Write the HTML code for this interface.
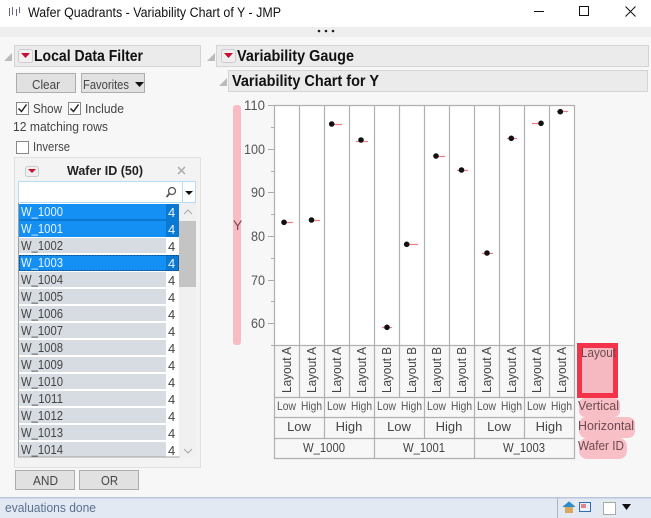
<!DOCTYPE html>
<html><head><meta charset="utf-8"><style>
html,body{margin:0;padding:0;background:#f7f7f7;width:651px;height:518px;overflow:hidden}
svg{display:block;font-family:"Liberation Sans",sans-serif;filter:blur(0.3px)}
text{fill:#444}
.h{font-weight:bold;font-size:15.5px;fill:#111}
.t{font-size:13px}
.r{font-size:13px;fill:#444}
.w{font-size:13px;fill:#e8f4ff}
.y{font-size:14px;fill:#555}
.v{font-size:13px;fill:#444}
.s{font-size:12px;fill:#555}
</style></head><body>
<svg width="651" height="518" viewBox="0 0 651 518" xmlns="http://www.w3.org/2000/svg">
<rect width="651" height="27" fill="#fff"/>
<rect y="27" width="651" height="10" fill="#eeeeee"/>
<!-- title -->
<g fill="none" stroke="#667" stroke-width="1"><path d="M9.5 8v8M12.5 7v8M16.5 9v7M19.5 7v6"/></g>
<text x="28" y="17" style="font-size:13.5px;fill:#111" textLength="253" lengthAdjust="spacingAndGlyphs">Wafer Quadrants - Variability Chart of Y - JMP</text>
<path d="M534 11.5h10" stroke="#111" stroke-width="1"/>
<rect x="579.5" y="6.5" width="9" height="9" fill="none" stroke="#111" stroke-width="1"/>
<path d="M625.5 6.5l10 10M635.5 6.5l-10 10" stroke="#111" stroke-width="1"/>
<g fill="#222"><circle cx="319" cy="31" r="1.3"/><circle cx="326" cy="31" r="1.3"/><circle cx="333" cy="31" r="1.3"/></g>

<!-- headers -->
<path d="M4 61h8v-8z" fill="#bbb"/>
<rect x="14.500" y="45.500" width="186" height="21" fill="#ebebeb" stroke="#d4d4d4"/>
<rect x="18.500" y="49.500" width="14" height="13" rx="2" fill="#f0f0f0" stroke="#ccc"/>
<path d="M21 53h9l-4.500 5z" fill="#c8102e"/>
<text x="34" y="61" class="h" textLength="109" lengthAdjust="spacingAndGlyphs">Local Data Filter</text>
<path d="M207 61h8v-8z" fill="#bbb"/>
<rect x="216.500" y="45.500" width="432" height="21" fill="#ebebeb" stroke="#d4d4d4"/>
<rect x="221.500" y="49.500" width="14" height="13" rx="2" fill="#f0f0f0" stroke="#ccc"/>
<path d="M224 53h9l-4.500 5z" fill="#c8102e"/>
<text x="237" y="61" class="h" textLength="117" lengthAdjust="spacingAndGlyphs">Variability Gauge</text>
<path d="M219 86h8v-8z" fill="#bbb"/>
<rect x="228.500" y="70.500" width="419" height="21" fill="#ebebeb" stroke="#d4d4d4"/>
<text x="232" y="86" class="h" textLength="147" lengthAdjust="spacingAndGlyphs">Variability Chart for Y</text>

<!-- filter controls -->
<rect x="16.500" y="73.500" width="59" height="19" fill="#e1e1e1" stroke="#adadad"/>
<text x="32" y="89" class="t" textLength="28" lengthAdjust="spacingAndGlyphs">Clear</text>
<rect x="81.500" y="73.500" width="63" height="19" fill="#e1e1e1" stroke="#adadad"/>
<text x="83" y="89" class="t" textLength="46" lengthAdjust="spacingAndGlyphs">Favorites</text>
<path d="M135 82h9l-4.500 5z" fill="#111"/>
<rect x="16.500" y="102.500" width="12" height="12" fill="#fff" stroke="#888"/>
<path d="M18.500 108.500l3 3 5-7" fill="none" stroke="#222" stroke-width="1.500"/>
<text x="33" y="113" class="t" textLength="29" lengthAdjust="spacingAndGlyphs">Show</text>
<rect x="68.500" y="102.500" width="12" height="12" fill="#fff" stroke="#888"/>
<path d="M70.500 108.500l3 3 5-7" fill="none" stroke="#222" stroke-width="1.500"/>
<text x="85" y="113" class="t" textLength="39" lengthAdjust="spacingAndGlyphs">Include</text>
<text x="13" y="131" class="t" textLength="95" lengthAdjust="spacingAndGlyphs">12 matching rows</text>
<rect x="16.500" y="141.500" width="12" height="12" fill="#fff" stroke="#888"/>
<text x="33" y="151" class="t" textLength="37" lengthAdjust="spacingAndGlyphs">Inverse</text>

<!-- filter box -->
<rect x="14.500" y="157.500" width="186" height="310" fill="#f3f3f3" stroke="#e0e0e0"/>
<rect x="25.500" y="166.500" width="13" height="10" rx="2" fill="#f0f0f0" stroke="#ccc"/>
<path d="M28 169h8l-4 4z" fill="#c8102e"/>
<text x="67" y="175" style="font-size:13px;font-weight:bold;fill:#222" textLength="76" lengthAdjust="spacingAndGlyphs">Wafer ID (50)</text>
<path d="M178 167l7 7M185 167l-7 7" stroke="#aaa" stroke-width="1.500"/>
<rect x="18.500" y="181.500" width="177" height="21" fill="#fff" stroke="#b5dcf5"/>
<path d="M182.500 181.500v21" stroke="#b5dcf5"/>
<circle cx="172" cy="191" r="3.500" fill="none" stroke="#555" stroke-width="1.300"/>
<path d="M169.500 193.500l-3 3.500" stroke="#555" stroke-width="1.800"/>
<path d="M185 191h8l-4 4z" fill="#111"/>

<!-- list -->
<rect x="18" y="203" width="161" height="254" fill="#fff"/>
<rect x="179" y="203" width="17" height="254" fill="#f0f0f0"/>
<rect x="179" y="221" width="17" height="66" fill="#c4c4c4"/>
<path d="M184 214l4-4 4 4" fill="none" stroke="#aaa"/>
<path d="M184 449l4 4 4-4" fill="none" stroke="#aaa"/>
<g fill="#d7dce2">
<rect x="19" y="238" width="147" height="15"/>
<rect x="19" y="272" width="147" height="15"/>
<rect x="19" y="289" width="147" height="15"/>
<rect x="19" y="306" width="147" height="15"/>
<rect x="19" y="323" width="147" height="15"/>
<rect x="19" y="340" width="147" height="15"/>
<rect x="19" y="357" width="147" height="15"/>
<rect x="19" y="374" width="147" height="15"/>
<rect x="19" y="391" width="147" height="15"/>
<rect x="19" y="408" width="147" height="15"/>
<rect x="19" y="425" width="147" height="15"/>
<rect x="19" y="442" width="147" height="15"/>
</g>
<g fill="#1490f5">
<rect x="19" y="204" width="147" height="15"/>
<rect x="19" y="221" width="147" height="16"/>
<rect x="19" y="255" width="147" height="16"/>
</g>
<g fill="#0b78d2">
<rect x="166" y="204" width="13" height="15"/>
<rect x="166" y="221" width="13" height="16"/>
<rect x="166" y="255" width="13" height="16"/>
</g>
<rect x="19" y="219" width="160" height="2" fill="#0b78d2"/>
<rect x="19.500" y="255.500" width="159" height="15" fill="none" stroke="#0a4f8c" stroke-dasharray="2 1"/>
<path d="M18.500 203v254h161" fill="none" stroke="#a0a0a0"/>
<g>
<text x="21" y="216" class="w" textLength="42" lengthAdjust="spacingAndGlyphs">W_1000</text>
<text x="21" y="233" class="w" textLength="42" lengthAdjust="spacingAndGlyphs">W_1001</text>
<text x="21" y="250" class="r" textLength="42" lengthAdjust="spacingAndGlyphs">W_1002</text>
<text x="21" y="267" class="w" textLength="42" lengthAdjust="spacingAndGlyphs">W_1003</text>
<text x="21" y="284" class="r" textLength="42" lengthAdjust="spacingAndGlyphs">W_1004</text>
<text x="21" y="301" class="r" textLength="42" lengthAdjust="spacingAndGlyphs">W_1005</text>
<text x="21" y="318" class="r" textLength="42" lengthAdjust="spacingAndGlyphs">W_1006</text>
<text x="21" y="335" class="r" textLength="42" lengthAdjust="spacingAndGlyphs">W_1007</text>
<text x="21" y="352" class="r" textLength="42" lengthAdjust="spacingAndGlyphs">W_1008</text>
<text x="21" y="369" class="r" textLength="42" lengthAdjust="spacingAndGlyphs">W_1009</text>
<text x="21" y="386" class="r" textLength="42" lengthAdjust="spacingAndGlyphs">W_1010</text>
<text x="21" y="403" class="r" textLength="42" lengthAdjust="spacingAndGlyphs">W_1011</text>
<text x="21" y="420" class="r" textLength="42" lengthAdjust="spacingAndGlyphs">W_1012</text>
<text x="21" y="437" class="r" textLength="42" lengthAdjust="spacingAndGlyphs">W_1013</text>
<text x="21" y="454" class="r" textLength="42" lengthAdjust="spacingAndGlyphs">W_1014</text>
<text x="168" y="217" class="w">4</text>
<text x="168" y="234" class="w">4</text>
<text x="168" y="251" class="r">4</text>
<text x="168" y="268" class="w">4</text>
<text x="168" y="285" class="r">4</text>
<text x="168" y="302" class="r">4</text>
<text x="168" y="319" class="r">4</text>
<text x="168" y="336" class="r">4</text>
<text x="168" y="353" class="r">4</text>
<text x="168" y="370" class="r">4</text>
<text x="168" y="387" class="r">4</text>
<text x="168" y="404" class="r">4</text>
<text x="168" y="421" class="r">4</text>
<text x="168" y="438" class="r">4</text>
<text x="168" y="455" class="r">4</text>
</g>
<rect x="15.500" y="470.500" width="59" height="19" fill="#e1e1e1" stroke="#adadad"/>
<text x="33" y="485" class="t" textLength="25" lengthAdjust="spacingAndGlyphs">AND</text>
<rect x="79.500" y="470.500" width="59" height="19" fill="#e1e1e1" stroke="#adadad"/>
<text x="101" y="485" class="t" textLength="17" lengthAdjust="spacingAndGlyphs">OR</text>

<!-- Y strip -->
<rect x="233" y="105" width="8" height="240" rx="3" fill="#f9bcc4"/>
<text x="233" y="230" class="y" style="fill:#7a4a52">Y</text>

<!-- axis -->
<text x="244" y="110" class="y" textLength="21" lengthAdjust="spacingAndGlyphs">110</text>
<text x="244" y="154" class="y" textLength="21" lengthAdjust="spacingAndGlyphs">100</text>
<text x="251" y="197" class="y" textLength="14" lengthAdjust="spacingAndGlyphs">90</text>
<text x="251" y="241" class="y" textLength="14" lengthAdjust="spacingAndGlyphs">80</text>
<text x="251" y="285" class="y" textLength="14" lengthAdjust="spacingAndGlyphs">70</text>
<text x="251" y="328" class="y" textLength="14" lengthAdjust="spacingAndGlyphs">60</text>
<path d="M268 105.500h6M268 149.500h6M268 192.500h6M268 236.500h6M268 280.500h6M268 323.500h6M271 127.500h3M271 171.500h3M271 214.500h3M271 258.500h3M271 301.500h3M271 345.500h3" stroke="#aaa"/>

<!-- plot -->
<rect x="274" y="105" width="301" height="240" fill="#fff"/>
<g stroke="#b0b0b0" fill="none" stroke-width="1.200">
<path d="M274.500 105.500h300v353h-300z"/>
<path d="M299.500 105v292M324.500 105v333M349.500 105v292M374.500 105v354M399.500 105v292M424.500 105v333M449.500 105v292M474.500 105v354M499.500 105v292M524.500 105v333M549.500 105v292"/>
<path d="M274 345.500h301M274 397.500h301M274 417.500h301M274 438.500h301"/>
</g>
<!-- means -->
<g stroke="#f0798a" stroke-width="1.300">
<path d="M284 222.500h9M311 220.500h9M332 124.500h10M356 141.500h12M382 327.500h10M407 244.500h11M436 156.500h9M457 170.500h11M482 253.500h11M507 138.500h10M532 123.500h10M557 111.500h11"/>
</g>
<g fill="#111">
<circle cx="284" cy="222.300" r="2.800"/><circle cx="311.500" cy="220" r="2.800"/><circle cx="331.700" cy="124" r="2.800"/><circle cx="361" cy="140" r="2.800"/>
<circle cx="387" cy="327.300" r="2.800"/><circle cx="406.700" cy="244.300" r="2.800"/><circle cx="436" cy="156" r="2.800"/><circle cx="461.500" cy="170" r="2.800"/>
<circle cx="487" cy="253" r="2.800"/><circle cx="511.300" cy="138.300" r="2.800"/><circle cx="541" cy="123.300" r="2.800"/><circle cx="560.300" cy="111.700" r="2.800"/>
</g>
<!-- rotated labels -->
<g>
<text transform="translate(291,393) rotate(-90)" class="v" textLength="46" lengthAdjust="spacingAndGlyphs">Layout A</text>
<text transform="translate(316,393) rotate(-90)" class="v" textLength="46" lengthAdjust="spacingAndGlyphs">Layout A</text>
<text transform="translate(341,393) rotate(-90)" class="v" textLength="46" lengthAdjust="spacingAndGlyphs">Layout A</text>
<text transform="translate(366,393) rotate(-90)" class="v" textLength="46" lengthAdjust="spacingAndGlyphs">Layout A</text>
<text transform="translate(391,393) rotate(-90)" class="v" textLength="46" lengthAdjust="spacingAndGlyphs">Layout B</text>
<text transform="translate(416,393) rotate(-90)" class="v" textLength="46" lengthAdjust="spacingAndGlyphs">Layout B</text>
<text transform="translate(441,393) rotate(-90)" class="v" textLength="46" lengthAdjust="spacingAndGlyphs">Layout B</text>
<text transform="translate(466,393) rotate(-90)" class="v" textLength="46" lengthAdjust="spacingAndGlyphs">Layout B</text>
<text transform="translate(491,393) rotate(-90)" class="v" textLength="46" lengthAdjust="spacingAndGlyphs">Layout A</text>
<text transform="translate(516,393) rotate(-90)" class="v" textLength="46" lengthAdjust="spacingAndGlyphs">Layout A</text>
<text transform="translate(541,393) rotate(-90)" class="v" textLength="46" lengthAdjust="spacingAndGlyphs">Layout A</text>
<text transform="translate(566,393) rotate(-90)" class="v" textLength="46" lengthAdjust="spacingAndGlyphs">Layout A</text>
</g>
<g text-anchor="middle">
<text x="286.500" y="410" class="s" textLength="19" lengthAdjust="spacingAndGlyphs">Low</text><text x="311.500" y="410" class="s" textLength="21" lengthAdjust="spacingAndGlyphs">High</text>
<text x="336.500" y="410" class="s" textLength="19" lengthAdjust="spacingAndGlyphs">Low</text><text x="361.500" y="410" class="s" textLength="21" lengthAdjust="spacingAndGlyphs">High</text>
<text x="386.500" y="410" class="s" textLength="19" lengthAdjust="spacingAndGlyphs">Low</text><text x="411.500" y="410" class="s" textLength="21" lengthAdjust="spacingAndGlyphs">High</text>
<text x="436.500" y="410" class="s" textLength="19" lengthAdjust="spacingAndGlyphs">Low</text><text x="461.500" y="410" class="s" textLength="21" lengthAdjust="spacingAndGlyphs">High</text>
<text x="486.500" y="410" class="s" textLength="19" lengthAdjust="spacingAndGlyphs">Low</text><text x="511.500" y="410" class="s" textLength="21" lengthAdjust="spacingAndGlyphs">High</text>
<text x="536.500" y="410" class="s" textLength="19" lengthAdjust="spacingAndGlyphs">Low</text><text x="561.500" y="410" class="s" textLength="21" lengthAdjust="spacingAndGlyphs">High</text>
<text x="299" y="431" class="v">Low</text><text x="349" y="431" class="v">High</text>
<text x="399" y="431" class="v">Low</text><text x="449" y="431" class="v">High</text>
<text x="499" y="431" class="v">Low</text><text x="549" y="431" class="v">High</text>
<text x="324" y="452" class="v" textLength="42" lengthAdjust="spacingAndGlyphs">W_1000</text><text x="424" y="452" class="v" textLength="42" lengthAdjust="spacingAndGlyphs">W_1001</text><text x="524" y="452" class="v" textLength="42" lengthAdjust="spacingAndGlyphs">W_1003</text>
</g>

<!-- pink legend -->
<rect x="579.500" y="345.500" width="36" height="50" fill="#f6b9c2" stroke="#f2334a" stroke-width="5"/>
<rect x="579" y="398" width="41" height="19" rx="6" fill="#f9bfc7"/>
<rect x="579" y="417" width="56" height="21" rx="7" fill="#f9bfc7"/>
<rect x="579" y="438" width="48" height="21" rx="8" fill="#f9bfc7"/>
<text x="581" y="357" class="v" style="fill:#6d4a50" textLength="35" lengthAdjust="spacingAndGlyphs">Layout</text>
<text x="578" y="410" class="v" style="fill:#6d4a50" textLength="41" lengthAdjust="spacingAndGlyphs">Vertical</text>
<text x="578" y="430" class="v" style="fill:#6d4a50" textLength="56" lengthAdjust="spacingAndGlyphs">Horizontal</text>
<text x="578" y="450" class="v" style="fill:#6d4a50" textLength="46" lengthAdjust="spacingAndGlyphs">Wafer ID</text>

<!-- status bar -->
<rect y="497" width="651" height="21" fill="#e3e9f3"/>
<rect y="497" width="651" height="1.500" fill="#b9c6dc"/>
<text x="5" y="512" class="t" style="fill:#5a7090" textLength="91" lengthAdjust="spacingAndGlyphs">evaluations done</text>
<path d="M557.500 498v20" stroke="#b5b5b5"/>
<path d="M563 507l6-5 6 5" fill="#2a8cc8" stroke="#2a8cc8"/>
<rect x="565" y="507" width="8" height="6" fill="#d8a860"/>
<rect x="579.500" y="502.500" width="11" height="9" fill="#eef" stroke="#2f6fb0"/>
<path d="M581 504h5v4h-5z" fill="#d88"/>
<rect x="603.500" y="502.500" width="12" height="12" fill="#fff" stroke="#aaa"/>
<path d="M622 504h9l-4.500 6z" fill="#111"/>
</svg>
</body></html>
